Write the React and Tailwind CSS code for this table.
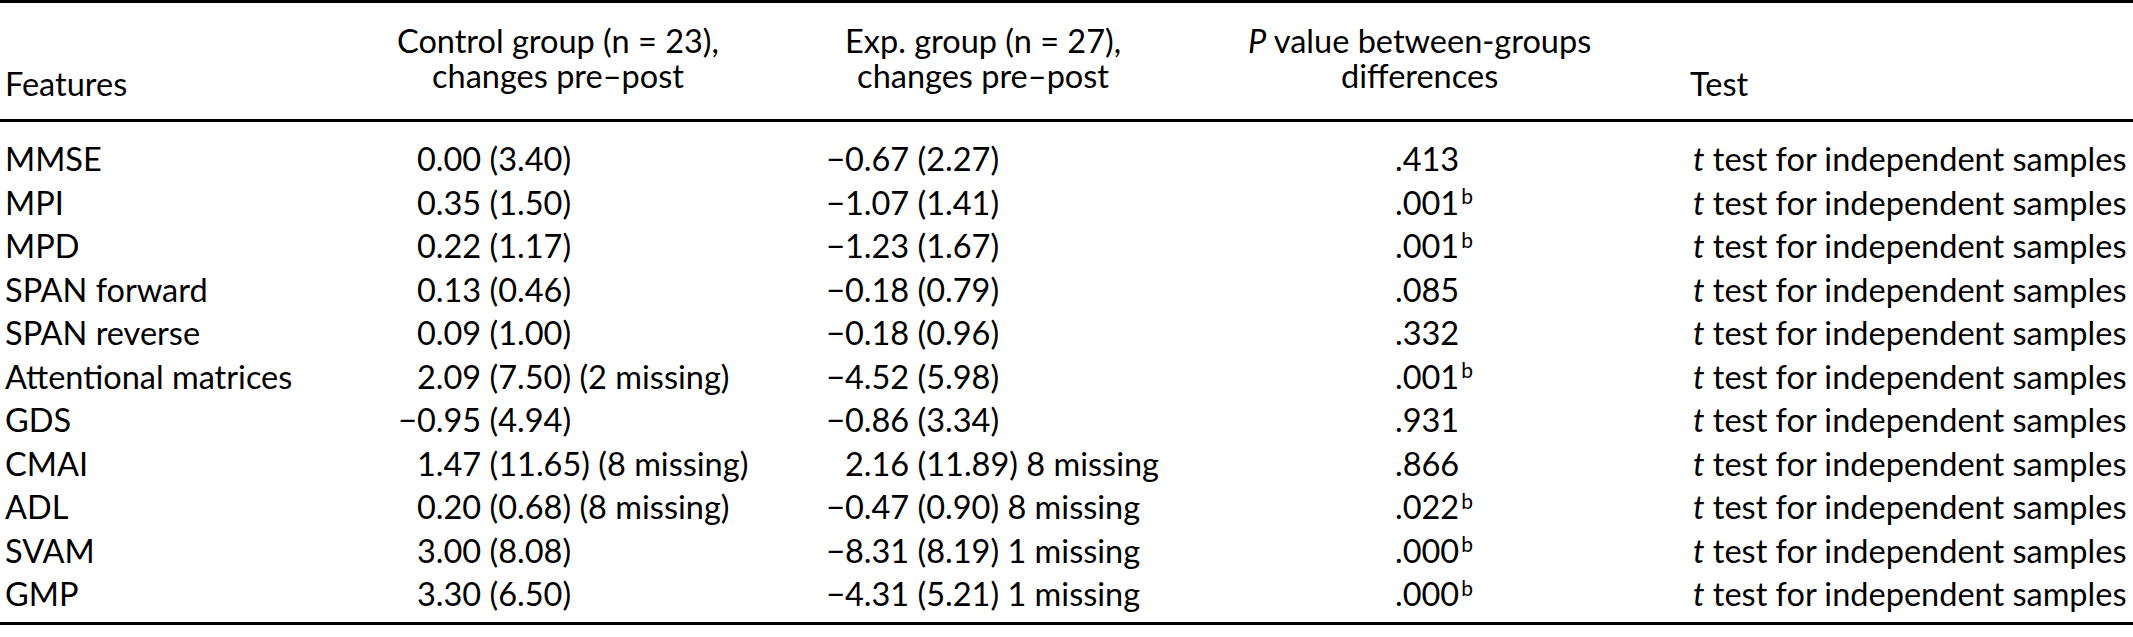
import React from "react";

const cols = "grid grid-cols-[385px_415px_435px_435px_1fr]";

const rows = [
  ["MMSE", "0.00 (3.40)", "−0.67 (2.27)", ".413", false],
  ["MPI", "0.35 (1.50)", "−1.07 (1.41)", ".001", true],
  ["MPD", "0.22 (1.17)", "−1.23 (1.67)", ".001", true],
  ["SPAN forward", "0.13 (0.46)", "−0.18 (0.79)", ".085", false],
  ["SPAN reverse", "0.09 (1.00)", "−0.18 (0.96)", ".332", false],
  ["Attentional matrices", "2.09 (7.50) (2 missing)", "−4.52 (5.98)", ".001", true],
  ["GDS", "−0.95 (4.94)", "−0.86 (3.34)", ".931", false],
  ["CMAI", "1.47 (11.65) (8 missing)", "2.16 (11.89) 8 missing", ".866", false],
  ["ADL", "0.20 (0.68) (8 missing)", "−0.47 (0.90) 8 missing", ".022", true],
  ["SVAM", "3.00 (8.08)", "−8.31 (8.19) 1 missing", ".000", true],
  ["GMP", "3.30 (6.50)", "−4.31 (5.21) 1 missing", ".000", true],
];

// negative values hang their minus sign left of the digit column
const Value = ({ text }) =>
  text.startsWith("−") ? (
    <span>
      <span className="inline-block w-[22px] -ml-[22px] text-right">−</span>
      {text.slice(1)}
    </span>
  ) : (
    <span>{text}</span>
  );

// two-line centred column heading
const Head = ({ first, second }) => (
  <div className="inline-flex flex-col items-center">
    <div className="h-[35px] overflow-visible">{first}</div>
    <div className="h-[35px] overflow-visible">{second}</div>
  </div>
);

export default function App() {
  return (
    <div className="min-h-screen bg-white text-black font-['Lato',sans-serif] text-[32.5px]">
      <div className="border-t-[3px] border-b-[3px] border-black">
        {/* Header */}
        <div className={`${cols} h-[119px] leading-[35px] border-b-[3px] border-black whitespace-nowrap`}>
          <div className="pl-[5px] pt-[63px]">Features</div>
          <div className="pl-[12px] pt-[20px]">
            <Head first="Control group (n = 23)," second="changes pre–post" />
          </div>
          <div className="pl-[45px] pt-[20px]">
            <Head first="Exp. group (n = 27)," second="changes pre–post" />
          </div>
          <div className="pl-[13px] pt-[20px]">
            <Head
              first={
                <>
                  <i>P</i> value between-groups
                </>
              }
              second="differences"
            />
          </div>
          <div className="pl-[20px] pt-[63px]">Test</div>
        </div>

        {/* Body */}
        <div className="pt-[15px] pb-[6px] leading-[43.5px]">
          {rows.map(([feature, ctrl, exp, p, sig]) => (
            <div key={feature} className={`${cols} whitespace-nowrap`}>
              <div className="pl-[5px]">{feature}</div>
              <div className="pl-[32px]">
                <Value text={ctrl} />
              </div>
              <div className="pl-[45px]">
                <Value text={exp} />
              </div>
              <div className="pl-[160px]">
                {p}
                {sig && <sup className="text-[21px] ml-[2px]">b</sup>}
              </div>
              <div className="pl-[23px]">
                <i>t</i> test for independent samples
              </div>
            </div>
          ))}
        </div>
      </div>
    </div>
  );
}
